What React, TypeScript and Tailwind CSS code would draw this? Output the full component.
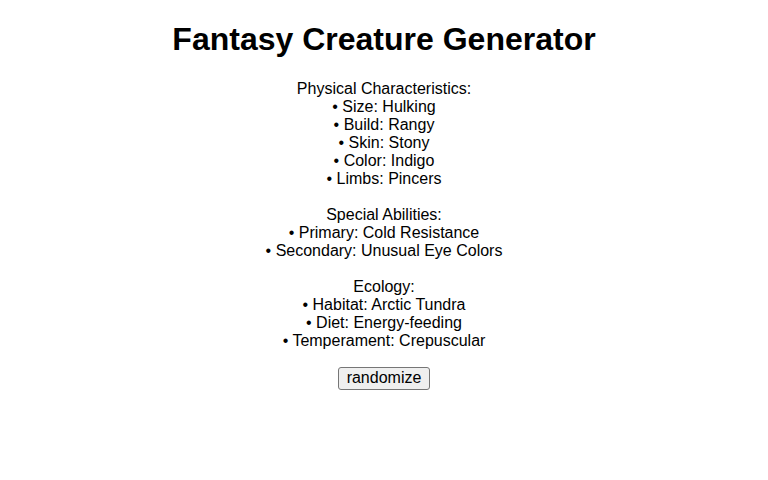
export default function App() {
  const sections = [
    {
      title: "Physical Characteristics:",
      items: ["Size: Hulking", "Build: Rangy", "Skin: Stony", "Color: Indigo", "Limbs: Pincers"],
    },
    {
      title: "Special Abilities:",
      items: ["Primary: Cold Resistance", "Secondary: Unusual Eye Colors"],
    },
    {
      title: "Ecology:",
      items: ["Habitat: Arctic Tundra", "Diet: Energy-feeding", "Temperament: Crepuscular"],
    },
  ];

  return (
    <div
      className="w-[768px] h-[480px] bg-white text-black text-center"
      style={{ fontFamily: '"Liberation Sans", Arial, sans-serif' }}
    >
      <h1 className="pt-[21px] text-[32px] leading-[37px] font-bold">Fantasy Creature Generator</h1>
      <div className="mt-[22px] text-[16px] leading-[18px] flex flex-col gap-[18px]">
        {sections.map((s) => (
          <div key={s.title}>
            <div>{s.title}</div>
            {s.items.map((it) => (
              <div key={it}>• {it}</div>
            ))}
          </div>
        ))}
      </div>
      <div className="mt-[16px]">
        <button className="inline-flex items-center justify-center w-[92px] h-[23px] bg-[#efefef] border border-[#767676] rounded-[3px] text-[16px] leading-[18px] text-black">
          randomize
        </button>
      </div>
    </div>
  );
}
